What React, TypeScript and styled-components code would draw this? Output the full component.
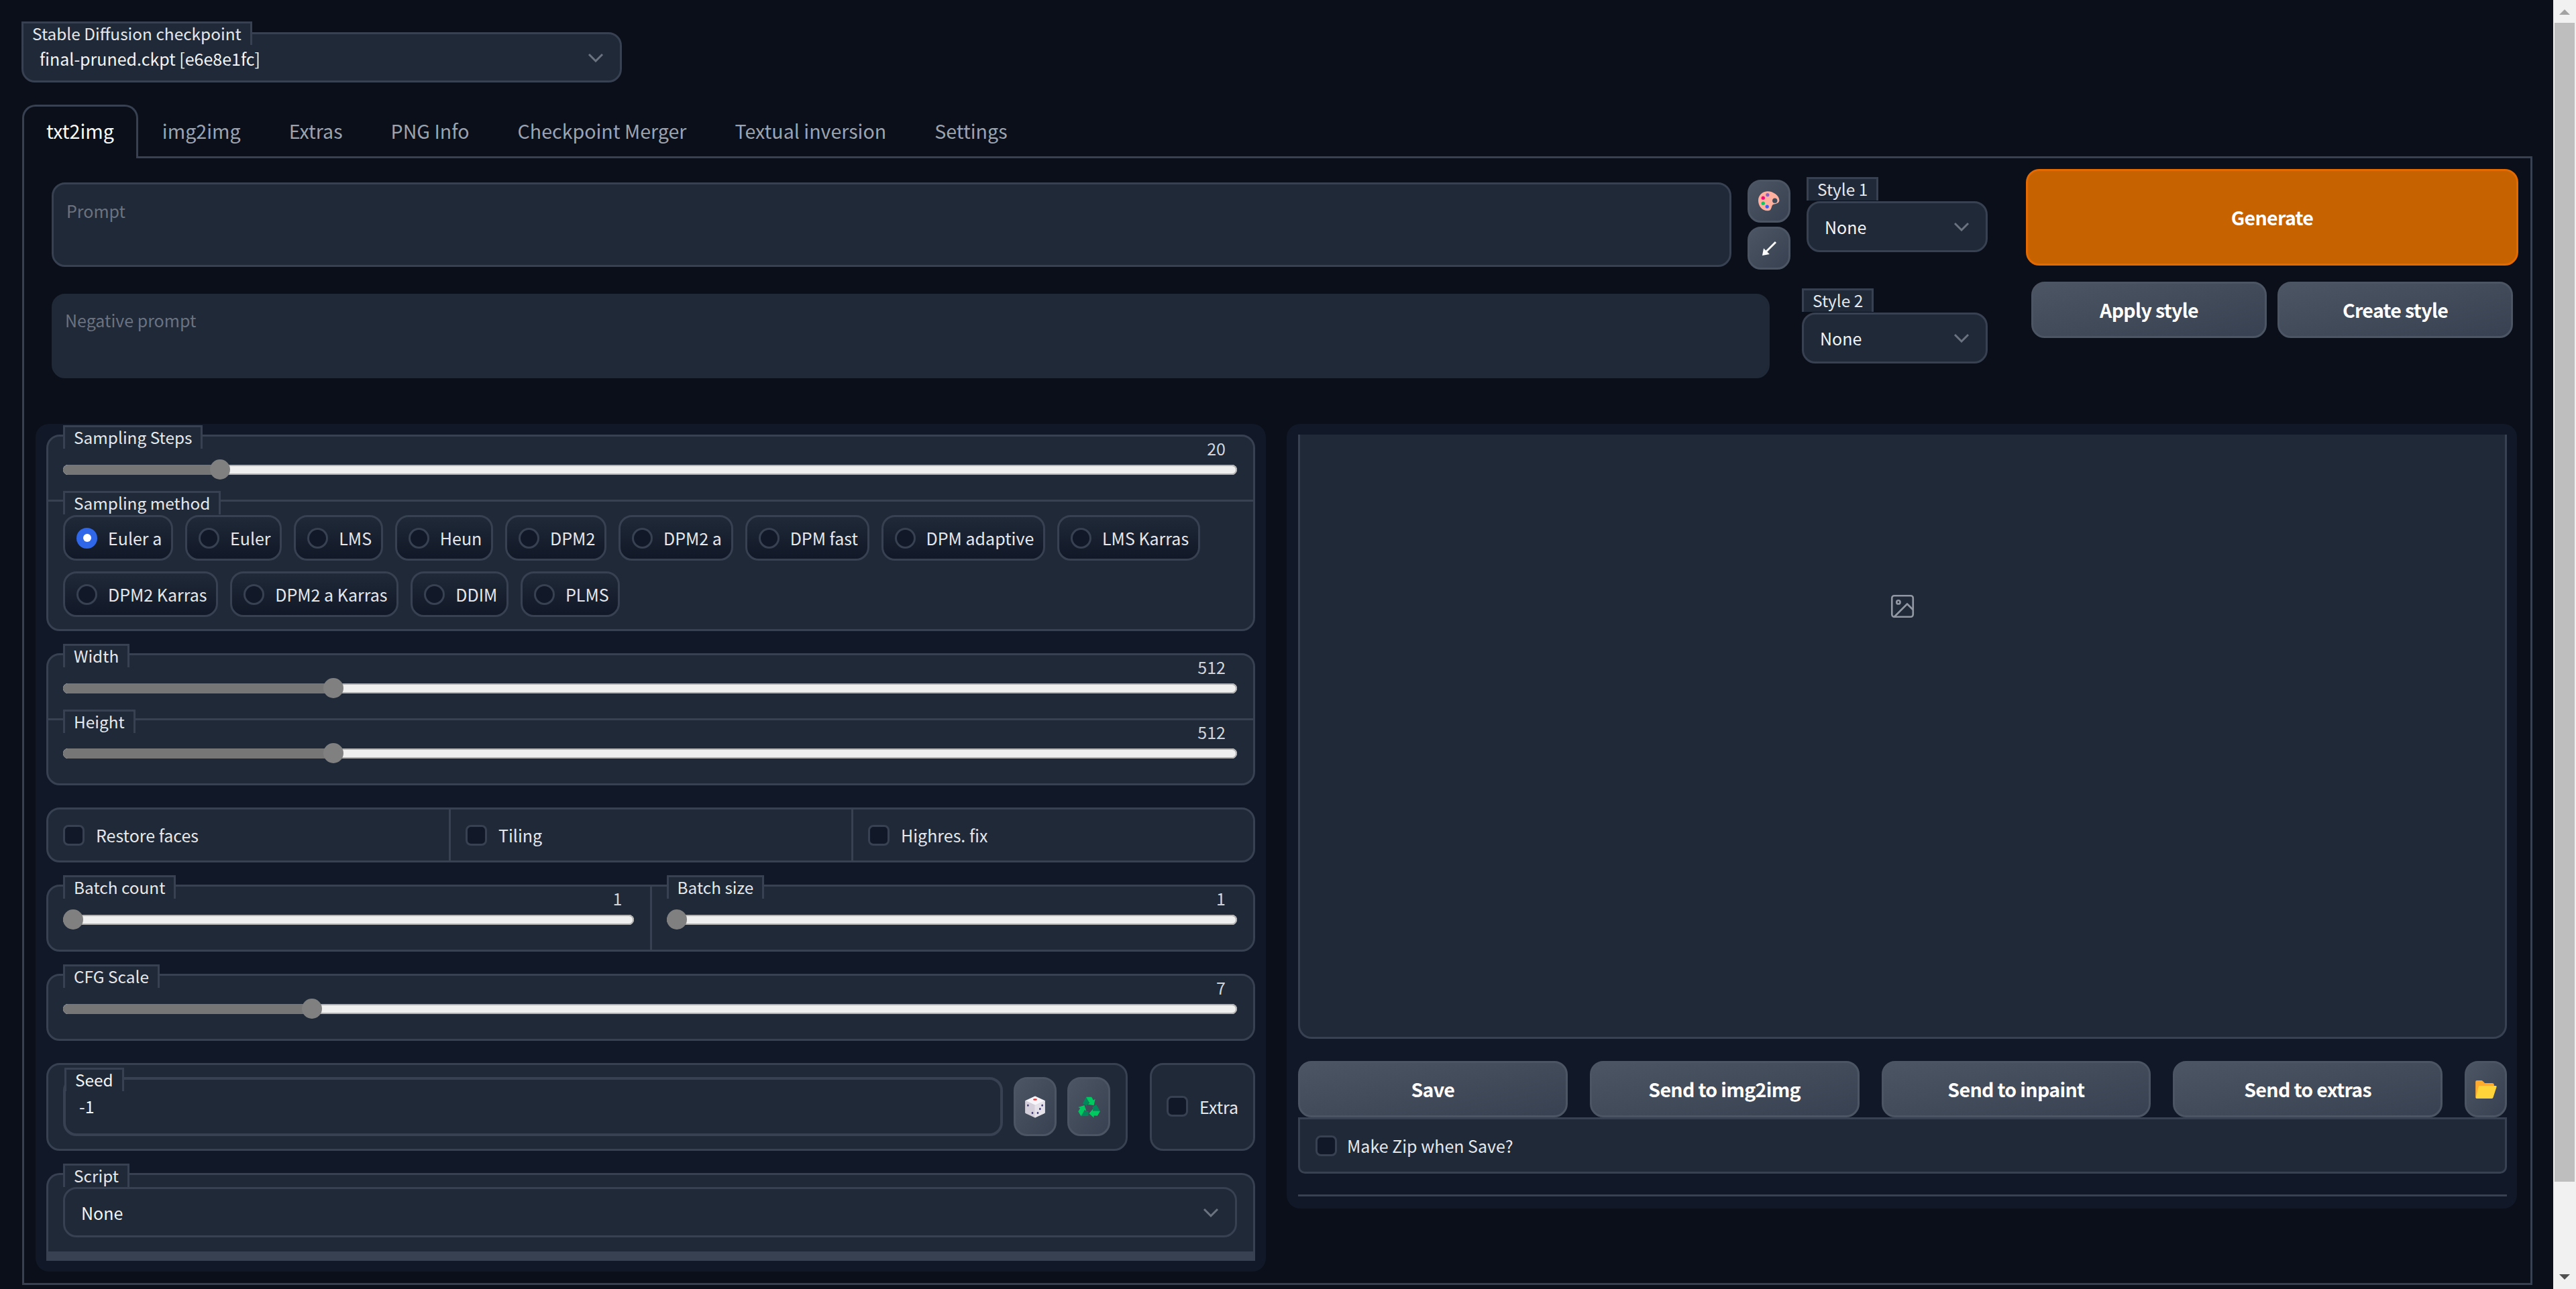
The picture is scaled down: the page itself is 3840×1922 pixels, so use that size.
import { createGlobalStyle, styled } from "styled-components";
import type { ReactNode } from "react";

const GlobalStyle = createGlobalStyle`
  * {
    box-sizing: border-box;
  }

  html,
  body {
    margin: 0;
    height: 100%;
    overflow: hidden;
    background: #0b0f19;
  }

  body {
    color: #e5e7eb;
    font-family: "Noto Sans CJK JP", "Source Sans Pro", "Noto Sans", sans-serif;
    font-size: 25px;
    line-height: 34px;
  }
`;

const Page = styled.div`
  display: flex;
  width: 3840px;
  height: 1922px;
  overflow: hidden;
`;

const Main = styled.main`
  width: 3806px;
  padding: 48px 31px 0 33px;
`;

const Scrollbar = styled.div`
  width: 34px;
  height: 1922px;
  padding: 14px 0;
  background: #f1f1f1;
  display: flex;
  flex-direction: column;
  align-items: center;
`;

const ScrollThumb = styled.div`
  width: 30px;
  height: 1728px;
  margin-top: 12px;
  flex: none;
  background: #bebebe;
`;

const ScrollArrow = styled.svg<{ $bottom?: boolean }>`
  width: 16px;
  height: 8px;
  flex: none;
  ${({ $bottom }) => $bottom && "margin-top: auto; margin-bottom: 0;"}
`;

// Fields and labels
const FieldLabel = styled.span<{ $top?: number; $left?: number }>`
  position: absolute;
  top: ${({ $top }) => $top ?? -17}px;
  left: ${({ $left }) => $left ?? 22}px;
  height: 35px;
  padding: 0 13px;
  background: #1f2937;
  border: 3px solid #374151;
  border-bottom: none;
  font-size: 24.4px;
  line-height: 30px;
  white-space: nowrap;
  z-index: 1;
`;

const SelectBox = styled.div<{ $height?: number }>`
  position: relative;
  width: 100%;
  height: ${({ $height }) => $height ?? 76}px;
  padding: 0 24px;
  background: #1f2937;
  border: 3px solid #374151;
  border-radius: 20px;
  display: flex;
  align-items: center;
  justify-content: space-between;
  color: #f3f4f6;
`;

const Checkpoint = styled.div`
  margin-left: -1px;
  width: 895px;
  height: 75px;
  position: relative;
`;

const CheckpointValue = styled.span`
  margin-top: 2px;
`;

const Chevron = () => (
  <svg width="24" height="14" viewBox="0 0 24 14" fill="none">
    <path d="M2 2l10 10L22 2" stroke="#6b7280" strokeWidth="3" />
  </svg>
);

// Tabs
const TabBar = styled.div`
  display: flex;
  height: 80px;
  margin-top: 33px;
  margin-bottom: -3px;
  position: relative;
`;

const Tab = styled.div<{ $active?: boolean }>`
  height: 80px;
  padding: 0 33px;
  line-height: 72px;
  font-size: 28.6px;
  color: ${({ $active }) => ($active ? "#f9fafb" : "#9ca3af")};
  background: ${({ $active }) => ($active ? "#0b0f19" : "transparent")};
  border: 3px solid ${({ $active }) => ($active ? "#374151" : "transparent")};
  border-bottom: none;
  border-radius: ${({ $active }) => ($active ? "20px 20px 0 0" : "0")};
`;

const TabPanel = styled.section`
  height: 1683px;
  padding: 16px 20px 14px 17px;
  border: 3px solid #374151;
`;

// Prompt area
const TopArea = styled.div`
  display: flex;
  height: 380px;
  margin-right: -2px;
  padding-left: 24px;
  justify-content: space-between;
`;

const PromptColumn = styled.div`
  width: 2886px;
  padding-top: 16px;
  display: flex;
  flex-direction: column;
  gap: 36px;
`;

const PromptRow = styled.div`
  display: flex;
  justify-content: space-between;
  align-items: flex-start;
`;

const PromptBox = styled.div<{ $width: number; $plain?: boolean; $offset: number; $indent: number; $textTop: number }>`
  width: ${({ $width }) => $width}px;
  height: 126px;
  margin-top: ${({ $offset }) => $offset}px;
  padding: ${({ $textTop }) => $textTop}px ${({ $indent }) => $indent}px;
  background: #1f2937;
  border: 3px solid ${({ $plain }) => ($plain ? "#1f2937" : "#374151")};
  border-radius: 20px;
  color: #6b7280;
`;

const IconStack = styled.div`
  display: flex;
  flex-direction: column;
  gap: 6px;
`;

const IconButton = styled.div<{ $height?: number }>`
  width: 64px;
  height: ${({ $height }) => $height ?? 64}px;
  background: linear-gradient(to bottom right, #4b5563, #374151);
  border: 3px solid #4b5563;
  border-radius: 20px;
  display: flex;
  align-items: center;
  justify-content: center;
`;

const StyleField = styled.div<{ $width: number; $offset: number }>`
  position: relative;
  width: ${({ $width }) => $width}px;
  margin-top: ${({ $offset }) => $offset}px;
`;

const ActionColumn = styled.div`
  width: 734px;
  display: flex;
  flex-direction: column;
  align-items: center;
  gap: 24px;
`;

const GenerateButton = styled.div`
  width: 100%;
  height: 144px;
  background: #c76200;
  border: 3px solid #e36a00;
  border-radius: 20px;
  display: flex;
  align-items: center;
  justify-content: center;
  font-size: 28.6px;
  font-weight: 700;
  letter-spacing: -0.7px;
  color: #fff;
`;

const StyleActions = styled.div`
  width: 718px;
  display: flex;
  gap: 16px;
`;

const ActionButton = styled.div<{ $fixed?: number }>`
  ${({ $fixed }) => ($fixed ? `width: ${$fixed}px;` : "flex: 1;")}
  height: 84px;
  background: linear-gradient(to bottom right, #4b5563, #374151);
  border: 3px solid #4b5563;
  border-radius: 20px;
  display: flex;
  align-items: center;
  justify-content: center;
  font-size: 28.6px;
  font-weight: 700;
  letter-spacing: -0.7px;
  color: #fff;
`;

// Lower columns
const Columns = styled.div`
  display: grid;
  grid-template-columns: 1834px 1834px;
  gap: 31px;
  align-items: start;
`;

const Surface = styled.div`
  background: #111827;
  border-radius: 20px;
`;

const SettingsPanel = styled(Surface)`
  padding: 16px;
  display: flex;
  flex-direction: column;
  gap: 33px;
`;

const Block = styled.div<{ $squareBottom?: boolean }>`
  position: relative;
  background: #1f2937;
  border: 3px solid #374151;
  ${({ $squareBottom }) => $squareBottom && "border-bottom: none;"}
  border-radius: ${({ $squareBottom }) => ($squareBottom ? "20px 20px 0 0" : "20px")};
`;

const SliderSection = styled.div<{ $divided?: boolean }>`
  position: relative;
  flex: 1;
  padding: 0 24px 30px 22px;
  ${({ $divided }) => $divided && "border-top: 3px solid #374151;"}
`;

const SliderValue = styled.div`
  height: 34px;
  padding-right: 17px;
  text-align: right;
  color: #d1d5db;
`;

const SliderRow = styled.div`
  position: relative;
  height: 30px;
  display: flex;
  align-items: center;
`;

const Track = styled.div`
  position: relative;
  flex: 1;
  height: 15px;
  background: #efefef;
  box-shadow: inset 0 0 0 2px #b2b2b2;
  border-radius: 8px;
  overflow: hidden;
`;

const TrackFill = styled.div`
  height: 100%;
  background: #767676;
`;

const Thumb = styled.div`
  position: absolute;
  top: 0;
  width: 30px;
  height: 30px;
  border-radius: 50%;
  background: #808080;
`;

interface SliderProps {
  label: string;
  value: number;
  min: number;
  max: number;
  divided?: boolean;
}

const Slider = ({ label, value, min, max, divided }: SliderProps) => {
  const ratio = (value - min) / (max - min);
  return (
    <SliderSection $divided={divided}>
      <FieldLabel $top={divided ? -16 : -17}>{label}</FieldLabel>
      <SliderValue>{value}</SliderValue>
      <SliderRow>
        <Track>
          <TrackFill style={{ width: `calc(15px + (100% - 30px) * ${ratio})` }} />
        </Track>
        <Thumb style={{ left: `calc((100% - 30px) * ${ratio})` }} />
      </SliderRow>
    </SliderSection>
  );
};

const RadioSection = styled.div`
  position: relative;
  padding: 20px 22px 18px;
  border-top: 3px solid #374151;
`;

const RadioWrap = styled.div`
  display: flex;
  flex-wrap: wrap;
  gap: 16px 18px;
`;

const RadioItem = styled.div`
  height: 68px;
  padding: 0 13.75px 0 17px;
  display: flex;
  align-items: center;
  gap: 16px;
  background: linear-gradient(to bottom, #1f2937, #111827);
  border: 3px solid #374151;
  border-radius: 20px;
  white-space: nowrap;
`;

const RadioDot = styled.span<{ $checked?: boolean }>`
  width: 31px;
  height: 31px;
  border-radius: 50%;
  background: ${({ $checked }) => ($checked ? "#2f67e8" : "#111827")};
  border: ${({ $checked }) => ($checked ? "none" : "3px solid #374151")};
  display: flex;
  align-items: center;
  justify-content: center;

  &::after {
    content: "";
    display: ${({ $checked }) => ($checked ? "block" : "none")};
    width: 12px;
    height: 12px;
    border-radius: 50%;
    background: #fff;
  }
`;

const CheckRow = styled(Block)`
  height: 82px;
  display: grid;
  grid-template-columns: 597px 600px 1fr;
`;

const CheckCell = styled.div`
  padding-left: 22px;
  display: flex;
  align-items: center;
  gap: 17px;

  & + & {
    border-left: 3px solid #374151;
  }
`;

const CheckBox = styled.span`
  width: 32px;
  height: 31px;
  flex: none;
  background: #111827;
  border: 3px solid #374151;
  border-radius: 8px;
`;

const SplitBlock = styled(Block)`
  display: flex;
`;

const SplitDivider = styled.div`
  width: 3px;
  background: #374151;
`;

const SeedRow = styled.div`
  display: flex;
  gap: 33px;
`;

const SeedBlock = styled(Block)`
  flex: 1;
  height: 131px;
  padding: 18px 23px 0 22px;
  display: flex;
  gap: 16px;
`;

const SeedInput = styled.div`
  position: relative;
  flex: 1;
  height: 88px;
  padding: 22px 20px;
  border: 4px solid #374151;
  border-radius: 20px;
  color: #f3f4f6;
`;

const ExtraBlock = styled(Block)`
  width: 157px;
  height: 131px;
  padding: 0 0 2px 22px;
  display: flex;
  align-items: center;
  gap: 17px;
`;

const ScriptBody = styled.div`
  padding: 18px 24px 21px 22px;
`;

const ScriptStrip = styled.div`
  height: 14px;
  background: #374151;
`;

// Result side
const ResultPanel = styled(Surface)`
  padding: 16px 15px 18px 17px;
`;

const Gallery = styled.div`
  height: 901px;
  padding-top: 235px;
  background: #1f2937;
  border: 3px solid #374151;
  border-top: none;
  border-radius: 0 0 20px 20px;
  display: flex;
  align-items: flex-start;
  justify-content: center;
`;

const ResultActions = styled.div`
  display: flex;
  gap: 33px;
  margin-top: 33px;
`;

const ZipRow = styled.div`
  height: 84px;
  padding-left: 23px;
  display: flex;
  align-items: center;
  gap: 15px;
  background: #1f2937;
  border: 3px solid #374151;
  border-radius: 0 0 10px 10px;
`;

const ResultLine = styled.div`
  height: 3px;
  margin-top: 31px;
  background: #374151;
`;

const PaletteIcon = () => (
  <svg width="32" height="30" viewBox="0 0 97 89">
    <path
      d="M40 0C65-2 97 20 95 42 93 58 70 55 64 62 58 72 60 89 42 88 18 88 0 65 0 42 0 18 18 2 40 0Z"
      fill="#ffb09f"
    />
    <circle cx="22" cy="30" r="8" fill="#ee0a78" />
    <circle cx="42" cy="16" r="8" fill="#8c5fc0" />
    <circle cx="22" cy="54" r="8" fill="#0cc860" />
    <circle cx="40" cy="69" r="8" fill="#3d5cf5" />
    <circle cx="75" cy="42" r="11" fill="#414a59" />
  </svg>
);

const ArrowIcon = () => (
  <svg width="21" height="21" viewBox="0 0 62 62" fill="#fff">
    <path d="M56 0l6 6L16 52 10 46Z" />
    <path d="M0 62L6 30 32 56Z" />
  </svg>
);

const DiceIcon = () => (
  <svg width="30" height="33" viewBox="0 0 90 98">
    <path d="M45 2L88 22 45 42 2 22Z" fill="#f7f5f9" stroke="#f7f5f9" strokeWidth="3" strokeLinejoin="round" />
    <path d="M2 22L45 42V96L2 76Z" fill="#d5cfdb" stroke="#d5cfdb" strokeWidth="3" strokeLinejoin="round" />
    <path d="M88 22V76L45 96V42Z" fill="#e6e2ea" stroke="#e6e2ea" strokeWidth="3" strokeLinejoin="round" />
    <ellipse cx="45" cy="16" rx="9" ry="4" fill="#f12e2e" />
    <ellipse cx="13" cy="42" rx="4" ry="5" fill="#453f77" />
    <ellipse cx="33" cy="76" rx="4" ry="5" fill="#453f77" />
    <ellipse cx="57" cy="76" rx="4" ry="5" fill="#453f77" />
    <ellipse cx="67" cy="58" rx="4" ry="5" fill="#453f77" />
    <ellipse cx="77" cy="42" rx="4" ry="5" fill="#453f77" />
  </svg>
);

const RecycleIcon = () => (
  <svg width="33" height="33" viewBox="0 0 98 98">
    {[0, 120, 240].map((angle) => (
      <g key={angle} transform={`rotate(${angle} 49 54)`}>
        <path d="M36 5L20 34 38 44 52 22Z" fill="#00875a" />
        <path d="M36 5H60L68 19 76 14 70 42 43 37 51 32Z" fill="#00c95f" />
      </g>
    ))}
  </svg>
);

const FolderIcon = () => (
  <svg width="32" height="27" viewBox="0 0 96 82">
    <path d="M0 6Q0 0 6 0H26Q30 0 33 3L42 12H76Q84 12 84 20V40L30 82H6Q0 82 0 76Z" fill="#ffab2e" />
    <path d="M18 24H91Q97 24 95 30L80 77Q79 82 74 82H6Q1 82 2 77L14 28Q15 24 18 24Z" fill="#ffd43b" />
  </svg>
);

const EmptyImageIcon = () => (
  <svg width="42" height="42" viewBox="0 0 24 24" fill="none" stroke="#9298a3" strokeWidth="1.5" strokeLinecap="round" strokeLinejoin="round">
    <rect x="3" y="3" width="18" height="18" rx="2" />
    <circle cx="8.5" cy="8.5" r="1.5" />
    <path d="M21 15l-5-5L5 21" />
  </svg>
);

const samplingMethods = [
  "Euler a",
  "Euler",
  "LMS",
  "Heun",
  "DPM2",
  "DPM2 a",
  "DPM fast",
  "DPM adaptive",
  "LMS Karras",
  "DPM2 Karras",
  "DPM2 a Karras",
  "DDIM",
  "PLMS",
];

const tabs = [
  "txt2img",
  "img2img",
  "Extras",
  "PNG Info",
  "Checkpoint Merger",
  "Textual inversion",
  "Settings",
];

const Check = ({ children }: { children: ReactNode }) => (
  <CheckCell>
    <CheckBox />
    {children}
  </CheckCell>
);

export default function App() {
  return (
    <Page>
      <GlobalStyle />
      <Main>
        <Checkpoint>
          <FieldLabel $top={-16} $left={0}>
            Stable Diffusion checkpoint
          </FieldLabel>
          <SelectBox $height={75}>
            <CheckpointValue>final-pruned.ckpt [e6e8e1fc]</CheckpointValue>
            <Chevron />
          </SelectBox>
        </Checkpoint>

        <TabBar>
          {tabs.map((tab, index) => (
            <Tab key={tab} $active={index === 0}>
              {tab}
            </Tab>
          ))}
        </TabBar>

        <TabPanel>
          <TopArea>
            <PromptColumn>
              <PromptRow>
                <PromptBox $width={2504} $offset={4} $indent={19} $textTop={22}>
                  Prompt
                </PromptBox>
                <IconStack>
                  <IconButton>
                    <PaletteIcon />
                  </IconButton>
                  <IconButton>
                    <ArrowIcon />
                  </IconButton>
                </IconStack>
                <StyleField $width={270} $offset={32}>
                  <FieldLabel $top={-36} $left={0}>
                    Style 1
                  </FieldLabel>
                  <SelectBox>
                    None
                    <Chevron />
                  </SelectBox>
                </StyleField>
              </PromptRow>
              <PromptRow>
                <PromptBox $width={2561} $plain $offset={0} $indent={17} $textTop={19}>
                  Negative prompt
                </PromptBox>
                <StyleField $width={277} $offset={28}>
                  <FieldLabel $top={-36} $left={0}>
                    Style 2
                  </FieldLabel>
                  <SelectBox>
                    None
                    <Chevron />
                  </SelectBox>
                </StyleField>
              </PromptRow>
            </PromptColumn>
            <ActionColumn>
              <GenerateButton>Generate</GenerateButton>
              <StyleActions>
                <ActionButton>Apply style</ActionButton>
                <ActionButton>Create style</ActionButton>
              </StyleActions>
            </ActionColumn>
          </TopArea>

          <Columns>
            <SettingsPanel>
              <Block>
                <Slider label="Sampling Steps" value={20} min={1} max={150} />
                <RadioSection>
                  <FieldLabel $top={-16}>Sampling method</FieldLabel>
                  <RadioWrap>
                    {samplingMethods.map((method, index) => (
                      <RadioItem key={method}>
                        <RadioDot $checked={index === 0} />
                        {method}
                      </RadioItem>
                    ))}
                  </RadioWrap>
                </RadioSection>
              </Block>

              <Block>
                <Slider label="Width" value={512} min={64} max={2048} />
                <Slider label="Height" value={512} min={64} max={2048} divided />
              </Block>

              <CheckRow>
                <Check>Restore faces</Check>
                <Check>Tiling</Check>
                <Check>Highres. fix</Check>
              </CheckRow>

              <SplitBlock>
                <Slider label="Batch count" value={1} min={1} max={16} />
                <SplitDivider />
                <Slider label="Batch size" value={1} min={1} max={8} />
              </SplitBlock>

              <Block>
                <Slider label="CFG Scale" value={7} min={1} max={30} />
              </Block>

              <SeedRow>
                <SeedBlock>
                  <SeedInput>
                    <FieldLabel $top={-18} $left={-2}>
                      Seed
                    </FieldLabel>
                    -1
                  </SeedInput>
                  <IconButton $height={88}>
                    <DiceIcon />
                  </IconButton>
                  <IconButton $height={88}>
                    <RecycleIcon />
                  </IconButton>
                </SeedBlock>
                <ExtraBlock>
                  <CheckBox />
                  Extra
                </ExtraBlock>
              </SeedRow>

              <Block $squareBottom>
                <FieldLabel>Script</FieldLabel>
                <ScriptBody>
                  <SelectBox $height={75}>
                    None
                    <Chevron />
                  </SelectBox>
                </ScriptBody>
                <ScriptStrip />
              </Block>
            </SettingsPanel>

            <ResultPanel>
              <Gallery>
                <EmptyImageIcon />
              </Gallery>
              <ResultActions>
                <ActionButton>Save</ActionButton>
                <ActionButton>Send to img2img</ActionButton>
                <ActionButton>Send to inpaint</ActionButton>
                <ActionButton>Send to extras</ActionButton>
                <ActionButton $fixed={63}>
                  <FolderIcon />
                </ActionButton>
              </ResultActions>
              <ZipRow>
                <CheckBox />
                Make Zip when Save?
              </ZipRow>
              <ResultLine />
            </ResultPanel>
          </Columns>
        </TabPanel>
      </Main>
      <Scrollbar>
        <ScrollArrow viewBox="0 0 16 8">
          <path d="M8 0L16 8H0Z" fill="#a3a3a3" />
        </ScrollArrow>
        <ScrollThumb />
        <ScrollArrow $bottom viewBox="0 0 16 8">
          <path d="M0 0H16L8 8Z" fill="#505050" />
        </ScrollArrow>
      </Scrollbar>
    </Page>
  );
}
